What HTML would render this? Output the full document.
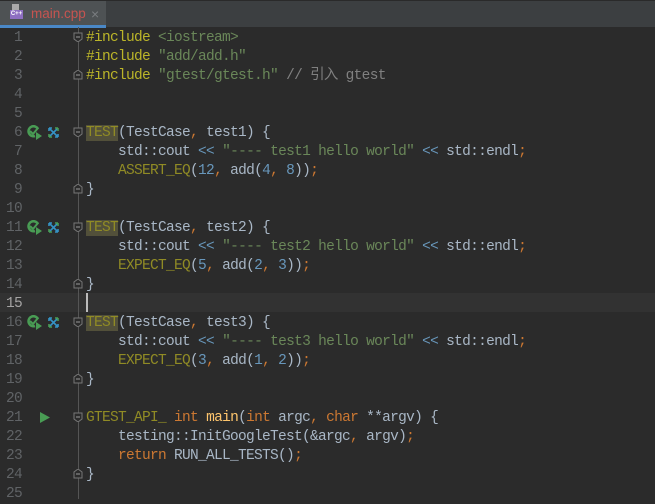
<!DOCTYPE html>
<html><head><meta charset="utf-8"><style>
body{margin:0;width:655px;height:499px;background:#2b2b2b;overflow:hidden;position:relative;font-family:"Liberation Mono","Noto Sans CJK SC",monospace;}
#tabs{position:absolute;left:0;top:0;width:655px;height:27px;background:#3c3f41;border-top:1px solid #2a2a2a;box-sizing:border-box}
#tab{position:absolute;left:0;top:0;width:106px;height:24px;background:#4e5254}
#ul{position:absolute;left:0;top:24px;width:106px;height:3px;background:#4a88c7}
.ln{position:absolute;left:0;width:22px;text-align:right;color:#606366;font-size:14.5px;letter-spacing:-0.7px;line-height:19px}
.code{position:absolute;left:86px;font-size:14.5px;letter-spacing:-0.7px;line-height:19px;color:#a9b7c6;white-space:pre}
.k{color:#cc7832}.s{color:#6a8759}.n{color:#6897bb}.m{color:#908b25}.p{color:#bbb529}.c{color:#808080}.f{color:#ffc66d}
.hl{background:#52503a}
#sep{position:absolute;left:78px;top:27px;width:1px;height:472px;background:#555}
.fold{position:absolute;left:73px;width:10px;height:10px}
</style></head><body>
<div id="tabs"><div id="tab"></div><div id="ul"></div>
<div style="position:absolute;left:12px;top:3px;width:7px;height:6px;background:#aaa"></div>
<div style="position:absolute;left:10px;top:9px;width:13px;height:9px;background:#8e6fc1;color:#fff;font:bold 6px 'Liberation Sans';line-height:9px;text-align:center">C++</div>
<div style="position:absolute;left:31px;top:4px;color:#c75450;font:13.5px 'Liberation Sans',sans-serif;line-height:18px">main.cpp</div>
<div style="position:absolute;left:91px;top:4px;color:#7a7d80;font:14px 'Liberation Sans';line-height:18px">×</div>
</div>
<div style="position:absolute;left:0;top:293px;width:655px;height:19px;background:#323232"></div>
<div id="sep"></div>
<div id="lines"></div>
<div style="position:absolute;left:86px;top:293px;width:2px;height:19px;background:#bbb"></div>
<script>
var L=[
'<span class="p">#include</span> <span class="s">&lt;iostream&gt;</span>',
'<span class="p">#include</span> <span class="s">"add/add.h"</span>',
'<span class="p">#include</span> <span class="s">"gtest/gtest.h"</span> <span class="c">// 引入 gtest</span>',
'','',
'<span class="m hl">TEST</span>(TestCase<span class="k">,</span> test1) {',
'    std::cout <span class="n">&lt;&lt;</span> <span class="s">"---- test1 hello world"</span> <span class="n">&lt;&lt;</span> std::endl<span class="k">;</span>',
'    <span class="m">ASSERT_EQ</span>(<span class="n">12</span><span class="k">,</span> add(<span class="n">4</span><span class="k">,</span> <span class="n">8</span>))<span class="k">;</span>',
'}','',
'<span class="m hl">TEST</span>(TestCase<span class="k">,</span> test2) {',
'    std::cout <span class="n">&lt;&lt;</span> <span class="s">"---- test2 hello world"</span> <span class="n">&lt;&lt;</span> std::endl<span class="k">;</span>',
'    <span class="m">EXPECT_EQ</span>(<span class="n">5</span><span class="k">,</span> add(<span class="n">2</span><span class="k">,</span> <span class="n">3</span>))<span class="k">;</span>',
'}','',
'<span class="m hl">TEST</span>(TestCase<span class="k">,</span> test3) {',
'    std::cout <span class="n">&lt;&lt;</span> <span class="s">"---- test3 hello world"</span> <span class="n">&lt;&lt;</span> std::endl<span class="k">;</span>',
'    <span class="m">EXPECT_EQ</span>(<span class="n">3</span><span class="k">,</span> add(<span class="n">1</span><span class="k">,</span> <span class="n">2</span>))<span class="k">;</span>',
'}','',
'<span class="m">GTEST_API_</span> <span class="k">int</span> <span class="f">main</span>(<span class="k">int</span> argc<span class="k">,</span> <span class="k">char</span> **argv) {',
'    testing::InitGoogleTest(&amp;argc<span class="k">,</span> argv)<span class="k">;</span>',
'    <span class="k">return</span> RUN_ALL_TESTS()<span class="k">;</span>',
'}',''];
var h='';
for(var i=0;i<L.length;i++){var t=29+i*19;
h+='<div class="ln" style="top:'+t+'px'+(i==14?';color:#a4a3a3':'')+'">'+(i+1)+'</div><div class="code" style="top:'+t+'px">'+L[i]+'</div>';}
var folds=[[1,0],[3,1],[6,0],[9,1],[11,0],[14,1],[16,0],[19,1],[21,0],[24,1]];
folds.forEach(function(f){var t=28+(f[0]-1)*19+4;
h+='<svg class="fold" style="top:'+t+'px" viewBox="0 0 10 10"><path d="'+(f[1]?'M1 9V3L5 0L9 3V9Z':'M1 1V7L5 10L9 7V1Z')+'" fill="#2b2b2b" stroke="#777"/><path d="M3 5H7" stroke="#999"/></svg>';});
[6,11,16].forEach(function(n){var t=28+(n-1)*19+2;
h+='<svg style="position:absolute;left:27px;top:'+t+'px" width="16" height="15" viewBox="0 0 16 15"><path d="M11 4A5 5 0 1 0 8 11" stroke="#499c54" stroke-width="2.5" fill="none"/><path d="M3 6L6 9L11 3" stroke="#499c54" stroke-width="2" fill="none"/><path d="M9 7L15 11L9 15Z" fill="#499c54"/></svg>';
h+='<svg style="position:absolute;left:48px;top:'+(t+2)+'px" width="11" height="11" viewBox="0 0 11 11"><path d="M1 1L10 10M10 1L1 10" stroke="#3592c4" stroke-width="1.6"/><path d="M1 1H4M1 1V4M10 10H7M10 10V7" stroke="#3592c4" stroke-width="1.6"/><path d="M10 1H7M10 1V4M1 10H4M1 10V7" stroke="#499c54" stroke-width="1.6"/></svg>';});
h+='<svg style="position:absolute;left:40px;top:'+(28+20*19+4)+'px" width="10" height="11"><path d="M0 0L10 5.5L0 11Z" fill="#499c54"/></svg>';
document.getElementById('lines').innerHTML=h;
</script>
</body></html>
